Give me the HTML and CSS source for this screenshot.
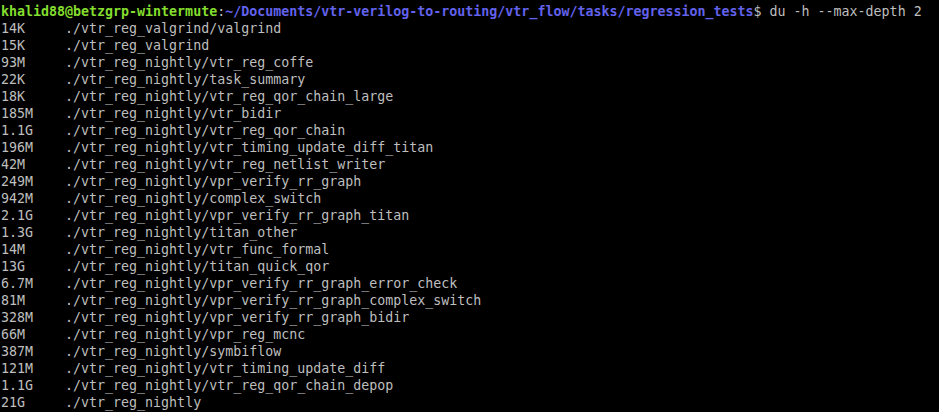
FILE: index.html
```html
<!DOCTYPE html>
<html>
<head>
<meta charset="utf-8">
<link rel="stylesheet" href="styles.css">
</head>
<body>
<pre class="term"><span class="user">khalid88@betzgrp-wintermute</span>:<span class="path">~/Documents/vtr-verilog-to-routing/vtr_flow/tasks/regression_tests</span>$ du -h --max-depth 2
14K	./vtr_reg_valgrind/valgrind
15K	./vtr_reg_valgrind
93M	./vtr_reg_nightly/vtr_reg_coffe
22K	./vtr_reg_nightly/task_summary
18K	./vtr_reg_nightly/vtr_reg_qor_chain_large
185M	./vtr_reg_nightly/vtr_bidir
1.1G	./vtr_reg_nightly/vtr_reg_qor_chain
196M	./vtr_reg_nightly/vtr_timing_update_diff_titan
42M	./vtr_reg_nightly/vtr_reg_netlist_writer
249M	./vtr_reg_nightly/vpr_verify_rr_graph
942M	./vtr_reg_nightly/complex_switch
2.1G	./vtr_reg_nightly/vpr_verify_rr_graph_titan
1.3G	./vtr_reg_nightly/titan_other
14M	./vtr_reg_nightly/vtr_func_formal
13G	./vtr_reg_nightly/titan_quick_qor
6.7M	./vtr_reg_nightly/vpr_verify_rr_graph_error_check
81M	./vtr_reg_nightly/vpr_verify_rr_graph_complex_switch
328M	./vtr_reg_nightly/vpr_verify_rr_graph_bidir
66M	./vtr_reg_nightly/vpr_reg_mcnc
387M	./vtr_reg_nightly/symbiflow
121M	./vtr_reg_nightly/vtr_timing_update_diff
1.1G	./vtr_reg_nightly/vtr_reg_qor_chain_depop
21G	./vtr_reg_nightly</pre>
</body>
</html>
```
FILE: styles.css
```css
html, body {
  margin: 0;
  padding: 0;
  background: #000;
  width: 939px;
  height: 412px;
  overflow: hidden;
}
.term {
  margin: 0;
  padding: 3px 0 0 1px;
  font-family: "DejaVu Sans Mono", monospace;
  font-size: 13.3px;
  line-height: 17px;
  color: #bebebe;
  tab-size: 8;
  white-space: pre;
}
.user {
  color: #84de2e;
  font-weight: bold;
}
.path {
  color: #6262ec;
  font-weight: bold;
}
```
